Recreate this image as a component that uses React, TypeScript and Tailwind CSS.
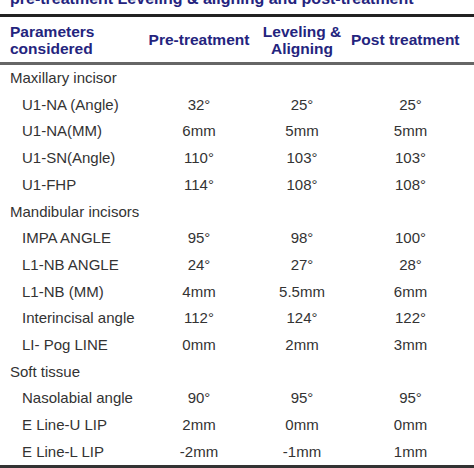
const rows: { label: string; group?: boolean; v?: [string, string, string] }[] = [
  { label: "Maxillary incisor", group: true },
  { label: "U1-NA (Angle)", v: ["32°", "25°", "25°"] },
  { label: "U1-NA(MM)", v: ["6mm", "5mm", "5mm"] },
  { label: "U1-SN(Angle)", v: ["110°", "103°", "103°"] },
  { label: "U1-FHP", v: ["114°", "108°", "108°"] },
  { label: "Mandibular incisors", group: true },
  { label: "IMPA ANGLE", v: ["95°", "98°", "100°"] },
  { label: "L1-NB ANGLE", v: ["24°", "27°", "28°"] },
  { label: "L1-NB (MM)", v: ["4mm", "5.5mm", "6mm"] },
  { label: "Interincisal angle", v: ["112°", "124°", "122°"] },
  { label: "LI- Pog LINE", v: ["0mm", "2mm", "3mm"] },
  { label: "Soft tissue", group: true },
  { label: "Nasolabial angle", v: ["90°", "95°", "95°"] },
  { label: "E Line-U LIP", v: ["2mm", "0mm", "0mm"] },
  { label: "E Line-L LIP", v: ["-2mm", "-1mm", "1mm"] },
];

const cols = "grid grid-cols-[145px_108px_98px_119px]";

export default function App() {
  return (
    <div
      className="w-[474px] h-[468px] overflow-hidden bg-white"
      style={{ fontFamily: '"Liberation Sans", Arial, sans-serif' }}
    >
      <div className="h-[14px] overflow-hidden">
        <p className="mt-[-10px] pl-[10px] text-[16px] font-bold leading-[18px] text-[#24247e] whitespace-nowrap">
          pre-treatment Leveling &amp; aligning and post-treatment
        </p>
      </div>
      <div className="h-[3px] bg-[#222]" />
      <div className={`${cols} h-[45px] items-center text-[15.5px] font-bold leading-[17px] text-[#24247e]`}>
        <div className="pl-[10px]">
          Parameters
          <br />
          considered
        </div>
        <div className="text-center">Pre-treatment</div>
        <div className="text-center">
          Leveling &amp;
          <br />
          Aligning
        </div>
        <div className="pl-0">Post treatment</div>
      </div>
      <div className="h-[3px] bg-[#666]" />
      <div className="text-[15px] text-[#333]">
        {rows.map((r, i) => (
          <div key={i} className={`${cols} h-[26.7px] items-center`}>
            <div className={r.group ? "pl-[10px] whitespace-nowrap" : "pl-[22px] whitespace-nowrap"}>
              {r.label}
            </div>
            {r.v?.map((x, j) => (
              <div key={j} className="text-center">
                {x}
              </div>
            ))}
          </div>
        ))}
      </div>
      <div className="h-[3px] bg-[#333]" />
    </div>
  );
}
